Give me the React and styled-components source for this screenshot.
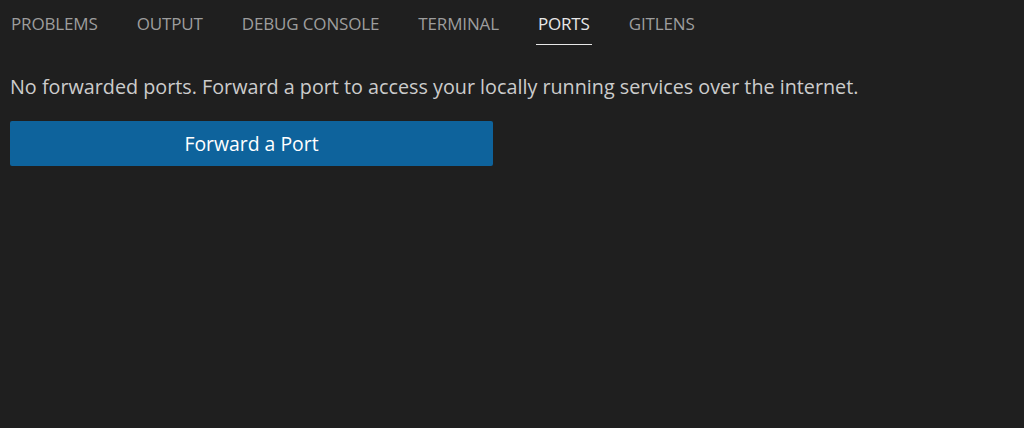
import React from 'react'
import styled, { createGlobalStyle } from 'styled-components'

const GlobalStyle = createGlobalStyle`
    html, body {
        margin: 0;
        padding: 0;
        background: #1f1f1f;
    }
    body {
        font-family: "Open Sans", "Noto Sans", sans-serif;
        -webkit-font-smoothing: antialiased;
    }
`

const tabs = ['PROBLEMS', 'OUTPUT', 'DEBUG CONSOLE', 'TERMINAL', 'PORTS', 'GITLENS']

const App = () => {
    return (
        <Wrapper>
            <GlobalStyle />
            <TabBar>
                {tabs.map((t) => (
                    <Tab key={t} $active={t === 'PORTS'}>
                        <TabLabel $active={t === 'PORTS'}>{t}</TabLabel>
                    </Tab>
                ))}
            </TabBar>
            <Content>
                <Message>
                    No forwarded ports. Forward a port to access your locally running services over the internet.
                </Message>
                <Button>Forward a Port</Button>
            </Content>
        </Wrapper>
    )
}

const Wrapper = styled.div`
    width: 1024px;
    height: 428px;
    background: #1f1f1f;
    overflow: hidden;
`

const TabBar = styled.ul`
    display: flex;
    gap: 35px;
    margin: 0;
    padding: 0 0 0 9px;
    list-style: none;
    height: 46px;
`

const Tab = styled.li`
    display: flex;
    align-items: flex-start;
    padding: 0 2px;
    height: 45px;
    box-sizing: border-box;
    border-bottom: 1px solid ${(p) => (p.$active ? '#e7e7e7' : 'transparent')};
`

const TabLabel = styled.span`
    font-size: 17px;
    line-height: 20px;
    margin-top: 14px;
    letter-spacing: -0.15px;
    color: ${(p) => (p.$active ? '#e7e7e7' : '#9d9d9d')};
`

const Content = styled.div`
    padding: 0 10px;
`

const Message = styled.p`
    margin: 28px 0 0;
    font-size: 19.75px;
    line-height: 26px;
    color: #cccccc;
    white-space: nowrap;
`

const Button = styled.button`
    display: flex;
    align-items: center;
    justify-content: center;
    margin-top: 21px;
    width: 483px;
    height: 45px;
    border: none;
    border-radius: 2px;
    background: #0e639c;
    color: #ffffff;
    font-family: inherit;
    font-size: 19.4px;
    cursor: pointer;
`

export default App
